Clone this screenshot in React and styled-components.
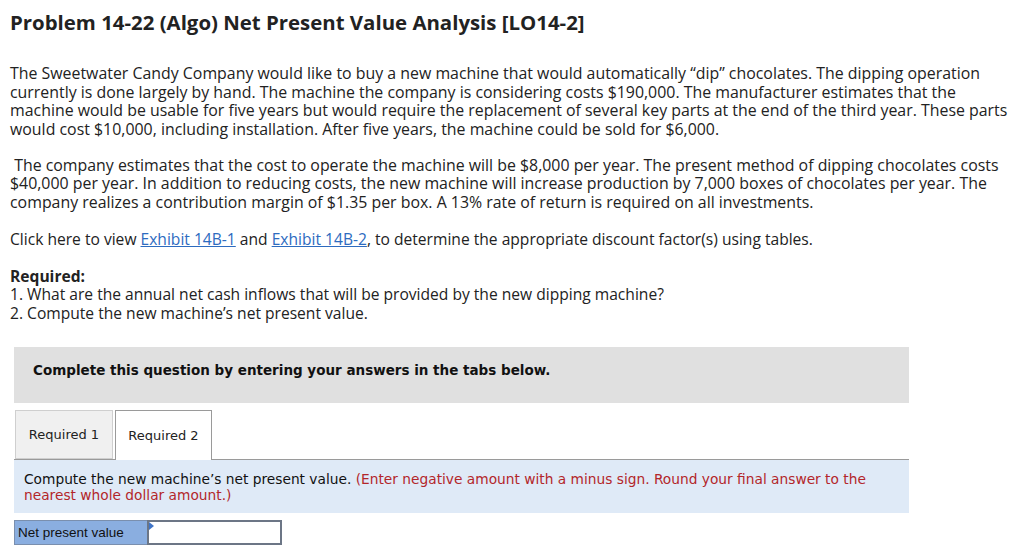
import React from "react";
import styled, { createGlobalStyle } from "styled-components";

const Global = createGlobalStyle`
  html, body { margin: 0; padding: 0; background: #fff; }
  body { font-family: "Open Sans", "Liberation Sans", sans-serif; color: #222; }
`;

const Page = styled.div`
  width: 1024px;
  padding: 10px 10px 0 10px;
  box-sizing: border-box;
`;

const Title = styled.h1`
  margin: 0;
  font-family: "Open Sans", sans-serif;
  font-weight: 700;
  font-size: 20.4px;
  line-height: 24px;
  color: #222;
`;

const Para = styled.div`
  margin: ${(p) => p.$top || 0}px 0 0 0;
  font-size: ${(p) => p.$size || 15.6}px;
  line-height: 18.7px;
  white-space: pre;
`;

const Line = styled.div`
  height: 18.7px;
  font-weight: ${(p) => (p.$bold ? 700 : 400)};
`;

const Link = styled.a`
  color: #2d6bbf;
  text-decoration: underline;
`;

const Section = styled.div`
  margin: 0 5px 0 4px;
  width: 895px;
`;

const Instruction = styled.div`
  margin-top: 24px;
  height: 56px;
  box-sizing: border-box;
  background: #e0e0e0;
  padding: 15px 0 0 19px;
  font-family: "DejaVu Sans", Verdana, sans-serif;
  font-weight: 700;
  font-size: 13.5px;
  line-height: 16px;
  color: #111;
`;

const Tabs = styled.div`
  margin-top: 7px;
  display: flex;
  align-items: flex-end;
  gap: 2px;
  padding-left: 1px;
  border-bottom: 1px solid #9a9a9a;
`;

const Tab = styled.div`
  width: ${(p) => (p.$active ? 97 : 98)}px;
  height: ${(p) => (p.$active ? 50 : 49)}px;
  margin-bottom: ${(p) => (p.$active ? -1 : 0)}px;
  box-sizing: border-box;
  border: 1px solid ${(p) => (p.$active ? "#9a9a9a" : "#cfcfcf")};
  border-bottom: ${(p) => (p.$active ? "none" : "1px solid #cfcfcf")};
  background: ${(p) => (p.$active ? "#fff" : "#f0f0f0")};
  display: flex;
  align-items: center;
  justify-content: center;
  font-family: "DejaVu Sans", Verdana, sans-serif;
  font-size: 13px;
  color: #222;
`;

const Prompt = styled.div`
  background: #dfeaf7;
  padding: 11px 30px 0 10px;
  height: 53px;
  box-sizing: border-box;
  font-family: "DejaVu Sans", Verdana, sans-serif;
  font-size: 13.75px;
  line-height: 16px;
  color: #111;
`;

const Red = styled.span`
  color: #b3262a;
`;

const AnswerRow = styled.div`
  margin-top: 7px;
  display: flex;
  height: 25px;
`;

const Label = styled.div`
  width: 133px;
  box-sizing: border-box;
  background: #8aaee0;
  border: 1px solid #7a8fae;
  border-right: none;
  display: flex;
  align-items: center;
  padding-left: 3px;
  font-family: "Liberation Sans", Arial, sans-serif;
  font-size: 13.5px;
  color: #111;
`;

const InputWrap = styled.div`
  position: relative;
  width: 135px;
  box-sizing: border-box;
  border: 2px solid #6c7686;
  background: #fff;
`;

const Marker = styled.span`
  position: absolute;
  left: 0;
  top: 0;
  width: 0;
  height: 0;
  border-top: 4px solid transparent;
  border-bottom: 4px solid transparent;
  border-left: 5px solid #3f74c7;
`;

const para1 = [
  "The Sweetwater Candy Company would like to buy a new machine that would automatically “dip” chocolates. The dipping operation",
  "currently is done largely by hand. The machine the company is considering costs $190,000. The manufacturer estimates that the",
  "machine would be usable for five years but would require the replacement of several key parts at the end of the third year. These parts",
  "would cost $10,000, including installation. After five years, the machine could be sold for $6,000.",
];

const para2 = [
  " The company estimates that the cost to operate the machine will be $8,000 per year. The present method of dipping chocolates costs",
  "$40,000 per year. In addition to reducing costs, the new machine will increase production by 7,000 boxes of chocolates per year. The",
  "company realizes a contribution margin of $1.35 per box. A 13% rate of return is required on all investments.",
];

export default function App() {
  return (
    <>
      <Global />
      <Page>
        <Title>Problem 14-22 (Algo) Net Present Value Analysis [LO14-2]</Title>
        <Para $top={30} $size={15.9}>
          {para1.map((t) => (
            <Line key={t}>{t}</Line>
          ))}
        </Para>
        <Para $top={17} $size={15.9}>
          {para2.map((t) => (
            <Line key={t}>{t}</Line>
          ))}
        </Para>
        <Para $top={18}>
          <Line>
            Click here to view <Link>Exhibit 14B-1</Link> and <Link>Exhibit 14B-2</Link>, to determine the appropriate discount factor(s) using tables.
          </Line>
        </Para>
        <Para $top={18}>
          <Line $bold>Required:</Line>
          <Line>1. What are the annual net cash inflows that will be provided by the new dipping machine?</Line>
          <Line>2. Compute the new machine’s net present value.</Line>
        </Para>
        <Section>
          <Instruction>Complete this question by entering your answers in the tabs below.</Instruction>
          <Tabs>
            <Tab>Required 1</Tab>
            <Tab $active>Required 2</Tab>
          </Tabs>
          <Prompt>
            Compute the new machine’s net present value. <Red>(Enter negative amount with a minus sign. Round your final answer to the</Red>
            <br />
            <Red>nearest whole dollar amount.)</Red>
          </Prompt>
          <AnswerRow>
            <Label>Net present value</Label>
            <InputWrap>
              <Marker />
            </InputWrap>
          </AnswerRow>
        </Section>
      </Page>
    </>
  );
}
